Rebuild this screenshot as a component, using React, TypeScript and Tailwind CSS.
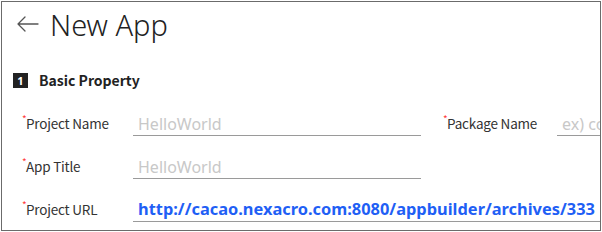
const font = { fontFamily: '"Noto Sans", "Noto Sans CJK KR", sans-serif' }
const labelFont = { fontFamily: '"Noto Sans CJK KR", "Noto Sans", sans-serif' }

function Label({ text }: { text: string }) {
  return (
    <div className="relative flex items-end text-[13.5px] tracking-[-0.2px] text-[#333] leading-none pb-[6px]" style={labelFont}>
      <span className="absolute -left-[4px] -top-[3px] text-[10px] text-[#ff3b3b]">*</span>
      {text}
    </div>
  )
}

function Field({ value, className, url }: { value: string; className: string; url?: boolean }) {
  return (
    <div className={`shrink-0 h-[30px] border-b border-[#9a9a9a] flex items-end pl-[5px] pb-[2px] whitespace-nowrap overflow-hidden ${className}`}>
      {url ? (
        <span className="text-[16.4px] font-bold text-[#1f5ff5] leading-none pb-[2px]">{value}</span>
      ) : (
        <span className="text-[16px] text-[#c8c8c8] leading-none pb-[1px]">{value}</span>
      )}
    </div>
  )
}

export default function App() {
  return (
    <div className="w-[602px] h-[232px] bg-white p-px" style={font}>
      <div className="h-full border border-[#6b6b6b] overflow-hidden">
        <div className="flex items-center h-[42px] pl-[15px] pt-[2px]">
          <svg width="22" height="16" viewBox="0 0 22 16" fill="none" stroke="#555" strokeWidth="1.3" strokeLinecap="round">
            <path d="M1 8h20M1 8l7-7M1 8l7 7" />
          </svg>
          <h1 className="ml-[11px] text-[29px] font-light text-[#222] leading-none">New App</h1>
        </div>

        <div className="flex items-center mt-[26px] pl-[11px]">
          <span className="w-[15px] h-[15px] bg-[#222] text-white text-[11px] font-bold flex items-center justify-center leading-none">1</span>
          <span className="ml-[11px] text-[14px] font-bold text-[#222]" style={labelFont}>Basic Property</span>
        </div>

        <div className="pl-[24px] mt-[15px] flex flex-col gap-[13px] min-w-[640px]">
          <div className="flex items-end">
            <div className="w-[107px] shrink-0"><Label text="Project Name" /></div>
            <Field value="HelloWorld" className="w-[288px]" />
            <div className="w-[26px] shrink-0" />
            <div className="w-[110px] shrink-0"><Label text="Package Name" /></div>
            <Field value="ex) com.nexacro.app" className="w-[120px]" />
          </div>
          <div className="flex items-end">
            <div className="w-[107px] shrink-0"><Label text="App Title" /></div>
            <Field value="HelloWorld" className="w-[288px]" />
          </div>
          <div className="flex items-end">
            <div className="w-[107px] shrink-0"><Label text="Project URL" /></div>
            <Field value="http://cacao.nexacro.com:8080/appbuilder/archives/333" className="w-[470px]" url />
          </div>
        </div>
      </div>
    </div>
  )
}
